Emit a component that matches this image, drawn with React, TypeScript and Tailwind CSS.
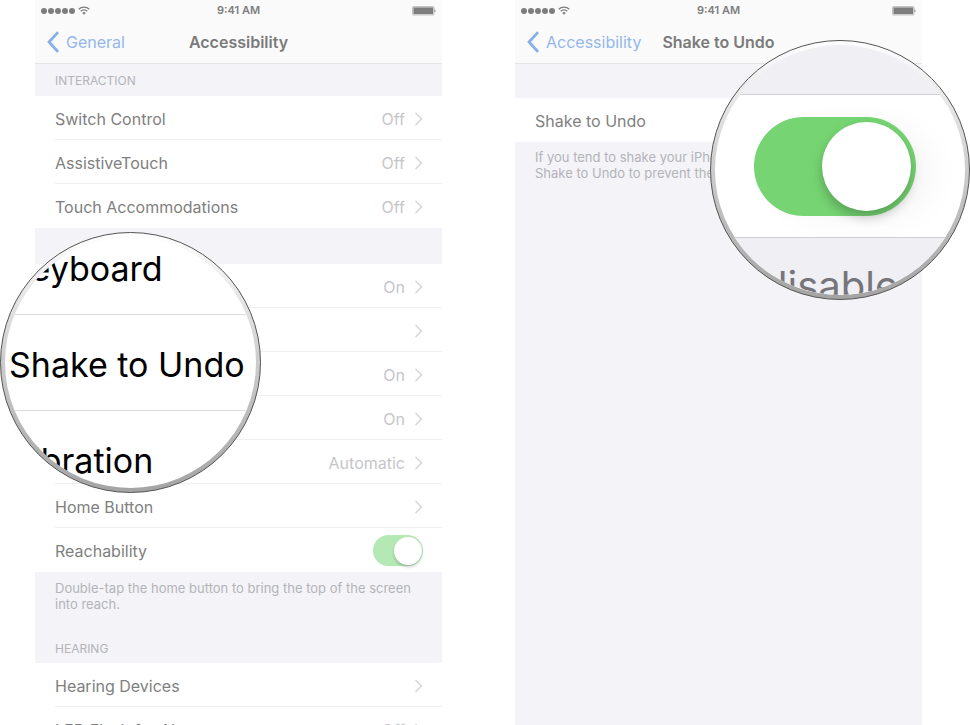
import type { ReactNode } from 'react'
import clsx from 'clsx'

interface SettingRow {
  name: string
  value?: string
  hideLabel?: boolean
}

const interactionRows: SettingRow[] = [
  { name: 'Switch Control', value: 'Off' },
  { name: 'AssistiveTouch', value: 'Off' },
  { name: 'Touch Accommodations', value: 'Off' },
]

// The lens sits over these labels, so only their values are drawn
const controlRows: SettingRow[] = [
  { name: '3D Touch', value: 'On', hideLabel: true },
  { name: 'Keyboard', hideLabel: true },
  { name: 'Shake to Undo', value: 'On', hideLabel: true },
  { name: 'Vibration', value: 'On', hideLabel: true },
  { name: 'Call Audio Routing', value: 'Automatic', hideLabel: true },
  { name: 'Home Button' },
]

const hearingRows: SettingRow[] = [
  { name: 'Hearing Devices' },
  { name: 'LED Flash for Alerts', value: 'Off' },
]

function WifiIcon() {
  return (
    <svg viewBox="0 0 24 18" className="h-[9px] w-3" fill="none" stroke="#7d7d7d" strokeWidth="2.6">
      <path d="M1.5 6.5a15 15 0 0 1 21 0" />
      <path d="M5.5 10.6a9.3 9.3 0 0 1 13 0" />
      <path d="M12 17.5l-3.4-3.6a4.8 4.8 0 0 1 6.8 0z" fill="#7d7d7d" stroke="none" />
    </svg>
  )
}

function BatteryIcon() {
  return (
    <svg viewBox="0 0 24 10" className="h-[10px] w-6">
      <rect x="0.5" y="0.5" width="21.5" height="8.5" rx="1" fill="#d8d8d8" stroke="#c4c4c4" />
      <rect x="1.5" y="1.5" width="19.5" height="6.5" fill="#7d7d7d" />
      <path d="M22.5 3.2c1.3.3 1.3 2.8 0 3.1z" fill="#7d7d7d" />
    </svg>
  )
}

function StatusBar() {
  return (
    <div className="grid h-5 grid-cols-3 items-center px-[6px] pt-px">
      <div className="flex items-center gap-[3px]">
        <div className="flex gap-px">
          {[0, 1, 2, 3, 4].map((dot) => (
            <span key={dot} className="size-[6px] rounded-full bg-[#7d7d7d]" />
          ))}
        </div>
        <WifiIcon />
      </div>
      <span className="text-center text-[11px] font-semibold text-[#7d7d7d]">9:41 AM</span>
      <div className="flex justify-end">
        <BatteryIcon />
      </div>
    </div>
  )
}

function PhoneHeader({ back, title }: { back: string; title: string }) {
  return (
    <header className="h-16 border-b border-[#e4e4e8] bg-[#fafafa]">
      <StatusBar />
      <nav className="grid h-11 grid-cols-[1fr_auto_1fr] items-center px-3">
        <a href="#back" className="flex items-center gap-[7px] text-base text-[#94b7ec]">
          <svg viewBox="0 0 12 22" className="h-[22px] w-3" fill="none" stroke="#8ab0ec" strokeWidth="2.8">
            <path d="M11 1.2L2 11l9 9.8" />
          </svg>
          {back}
        </a>
        <h1 className="text-base font-semibold text-[#7a7a7a]">{title}</h1>
      </nav>
    </header>
  )
}

function Row({ row, last }: { row: SettingRow; last: boolean }) {
  return (
    <button
      aria-label={row.name}
      className={clsx(
        'flex h-11 w-full shrink-0 items-center gap-[9px] border-b pt-[2px] pr-[19px] text-left',
        last ? 'border-transparent' : 'border-[#f0f0f3]'
      )}
    >
      <span className="flex-1 text-[#808080]">{row.hideLabel ? '' : row.name}</span>
      <span className="text-[#c6c6c9]">{row.value}</span>
      <svg viewBox="0 0 9 14" className="h-[14px] w-[9px]" fill="none" stroke="#d8d8db" strokeWidth="1.6">
        <path d="M1.5 1l6 6-6 6" />
      </svg>
    </button>
  )
}

function Group({ rows, children }: { rows: SettingRow[]; children?: ReactNode }) {
  return (
    <section className="bg-white pl-5 text-base">
      {rows.map((row, i) => (
        <Row key={row.name} row={row} last={!children && i === rows.length - 1} />
      ))}
      {children}
    </section>
  )
}

function Lens({ className, children }: { className: string; children: ReactNode }) {
  return (
    <div
      className={clsx(
        'absolute rounded-full border border-[#555555] bg-linear-to-b from-white via-[#cccccc] to-[#a4a4a4] p-1',
        className
      )}
    >
      <div className="flex size-full flex-col overflow-hidden rounded-full bg-white">
        {children}
      </div>
    </div>
  )
}

function AccessibilityPhone() {
  return (
    <div className="bg-[#f3f3f8]">
      <PhoneHeader back="General" title="Accessibility" />
      <h2 className="flex h-8 items-center pt-[2px] pl-5 text-xs text-[#b3b3b8]">INTERACTION</h2>
      <Group rows={interactionRows} />
      <div className="h-9" />
      <Group rows={controlRows}>
        <div className="flex h-11 items-center justify-between pt-px pr-[19px]">
          <label htmlFor="reachability" className="text-[#808080]">
            Reachability
          </label>
          <input
            id="reachability"
            type="checkbox"
            role="switch"
            defaultChecked
            className="flex h-[31px] w-[50px] appearance-none items-center justify-end rounded-full bg-[#b4e8b5] pr-px before:size-7 before:rounded-full before:bg-white before:shadow-[0_2px_3px_rgba(0,0,0,0.2)]"
          />
        </div>
      </Group>
      <p className="px-5 pt-2 text-[13px] leading-4 text-[#b3b3b8]">
        Double-tap the home button to bring the top of the screen
        <br />
        into reach.
      </p>
      <h2 className="flex h-[51px] items-end pb-[6px] pl-5 text-xs text-[#b3b3b8]">HEARING</h2>
      <Group rows={hearingRows} />
    </div>
  )
}

function ShakePhone() {
  return (
    <div className="bg-[#f3f3f8]">
      <PhoneHeader back="Accessibility" title="Shake to Undo" />
      <div className="mt-[34px] flex h-11 items-center bg-white pt-px pl-5 text-base">
        <label htmlFor="shake" className="text-[#808080]">
          Shake to Undo
        </label>
      </div>
      <p className="px-5 pt-[7px] text-[13px] leading-4 text-[#b3b3b8]">
        If you tend to shake your iPhone by accident,
        <br />
        Shake to Undo to prevent the alert.
      </p>
    </div>
  )
}

export default function App() {
  return (
    <main className="relative h-screen overflow-hidden bg-white font-['Inter','Liberation_Sans',sans-serif]">
      <div className="grid min-h-screen grid-cols-2 gap-[73px] pr-12 pl-[35px]">
        <AccessibilityPhone />
        <ShakePhone />
      </div>

      <Lens className="top-[232px] left-0 size-[261px]">
        <div className="flex h-full flex-col justify-center">
          {['Keyboard', 'Shake to Undo', 'Vibration'].map((label) => (
            <div
              key={label}
              className="flex h-24 shrink-0 items-center border-b border-[#dcdcde] pt-1 pl-1 text-[34px] whitespace-nowrap text-black"
            >
              {label}
            </div>
          ))}
        </div>
      </Lens>

      <Lens className="top-10 right-0 size-[260px]">
        <div className="h-[49px] shrink-0 bg-[#efeff4]" />
        <div className="flex h-36 shrink-0 items-center justify-center border-y border-[#cfcfd3] pr-[10px]">
          <input
            id="shake"
            type="checkbox"
            role="switch"
            defaultChecked
            className="flex h-[99px] w-[162px] appearance-none items-center justify-end rounded-full bg-[#76d572] pr-[5px] shadow-[20px_6px_30px_rgba(0,0,0,0.03)] before:size-[89px] before:rounded-full before:bg-white before:shadow-[0_6px_12px_rgba(0,0,0,0.25)]"
          />
        </div>
        <div className="flex-1 bg-[#efeff4] pt-6 pl-12 text-[40px] leading-12 text-[#75757a]">
          disable
        </div>
      </Lens>
    </main>
  )
}
